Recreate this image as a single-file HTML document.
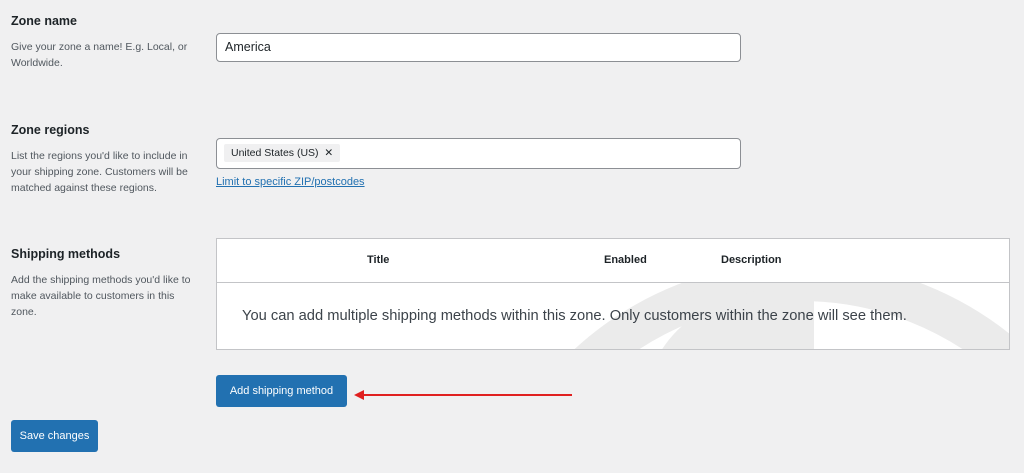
<!DOCTYPE html><html><head><style>
html{overflow:hidden}
body{margin:0;width:1024px;height:473px;background:#f0f0f1;font-family:"Liberation Sans",sans-serif;color:#1d2327;position:relative;overflow:hidden}
.a{position:absolute}
h{position:absolute;font-weight:bold;font-size:12.5px}
.d{position:absolute;font-size:10.5px;color:#50575e;line-height:16px;width:182px}
.in{position:absolute;background:#fff;border:1px solid #8c8f94;border-radius:4px;box-sizing:border-box}
.btn{position:absolute;background:#2271b1;color:#fff;font-size:11px;border-radius:3px;display:flex;align-items:center;justify-content:center}
</style></head><body>
<h style="left:11px;top:14px">Zone name</h>
<div class="d" style="left:11px;top:39px;width:190px">Give your zone a name! E.g. Local, or Worldwide.</div>
<div class="in" style="left:216px;top:33px;width:525px;height:29px;font-size:12.5px;padding:6px 8px">America</div>
<h style="left:11px;top:123px">Zone regions</h>
<div class="d" style="left:11px;top:148px;width:178px">List the regions you'd like to include in your shipping zone. Customers will be matched against these regions.</div>
<div class="in" style="left:216px;top:138px;width:525px;height:31px"><span class="a" style="left:7px;top:5px;background:#f0f0f1;padding:3px 7px;font-size:10.5px;border-radius:2px">United States (US) &nbsp;✕</span></div>
<div class="a" style="left:216px;top:176px;font-size:11px;color:#2271b1;text-decoration:underline">Limit to specific ZIP/postcodes</div>
<h style="left:11px;top:247px">Shipping methods</h>
<div class="d" style="left:11px;top:272px;width:186px">Add the shipping methods you'd like to make available to customers in this zone.</div>
<div class="a" style="left:216px;top:238px;width:792px;height:110px;background:#fff;border:1px solid #c3c4c7;overflow:hidden">
<svg class="a" style="left:0;top:0" width="792" height="110">
<circle cx="584" cy="357" r="315" fill="none" stroke="#ebebeb" stroke-width="40"/>
<path d="M444 112 Q470 70 530 54 Q560 48 597 48 L597 112 L585 112 L585 95 L575 90 L580 80 L575 70 L585 65 L585 112 Z" fill="#ebebeb"/>
</svg>
<div class="a" style="left:0;top:0;width:792px;height:43px;border-bottom:1px solid #c3c4c7;background:#fff"></div>
<div class="a" style="left:150px;top:15px;font-weight:bold;font-size:11px">Title</div>
<div class="a" style="left:387px;top:15px;font-weight:bold;font-size:11px">Enabled</div>
<div class="a" style="left:504px;top:15px;font-weight:bold;font-size:11px">Description</div>
<div class="a" style="left:25px;top:69px;font-size:14.7px;color:#3c434a">You can add multiple shipping methods within this zone. Only customers within the zone will see them.</div>
</div>
<div class="btn" style="left:216px;top:375px;width:131px;height:32px">Add shipping method</div>
<svg class="a" style="left:352px;top:388px" width="222" height="14"><line x1="8" y1="7" x2="220" y2="7" stroke="#e02020" stroke-width="2"/><polygon points="2,7 12,2 12,12" fill="#e02020"/></svg>
<div class="btn" style="left:11px;top:420px;width:87px;height:32px">Save changes</div>
</body></html>
